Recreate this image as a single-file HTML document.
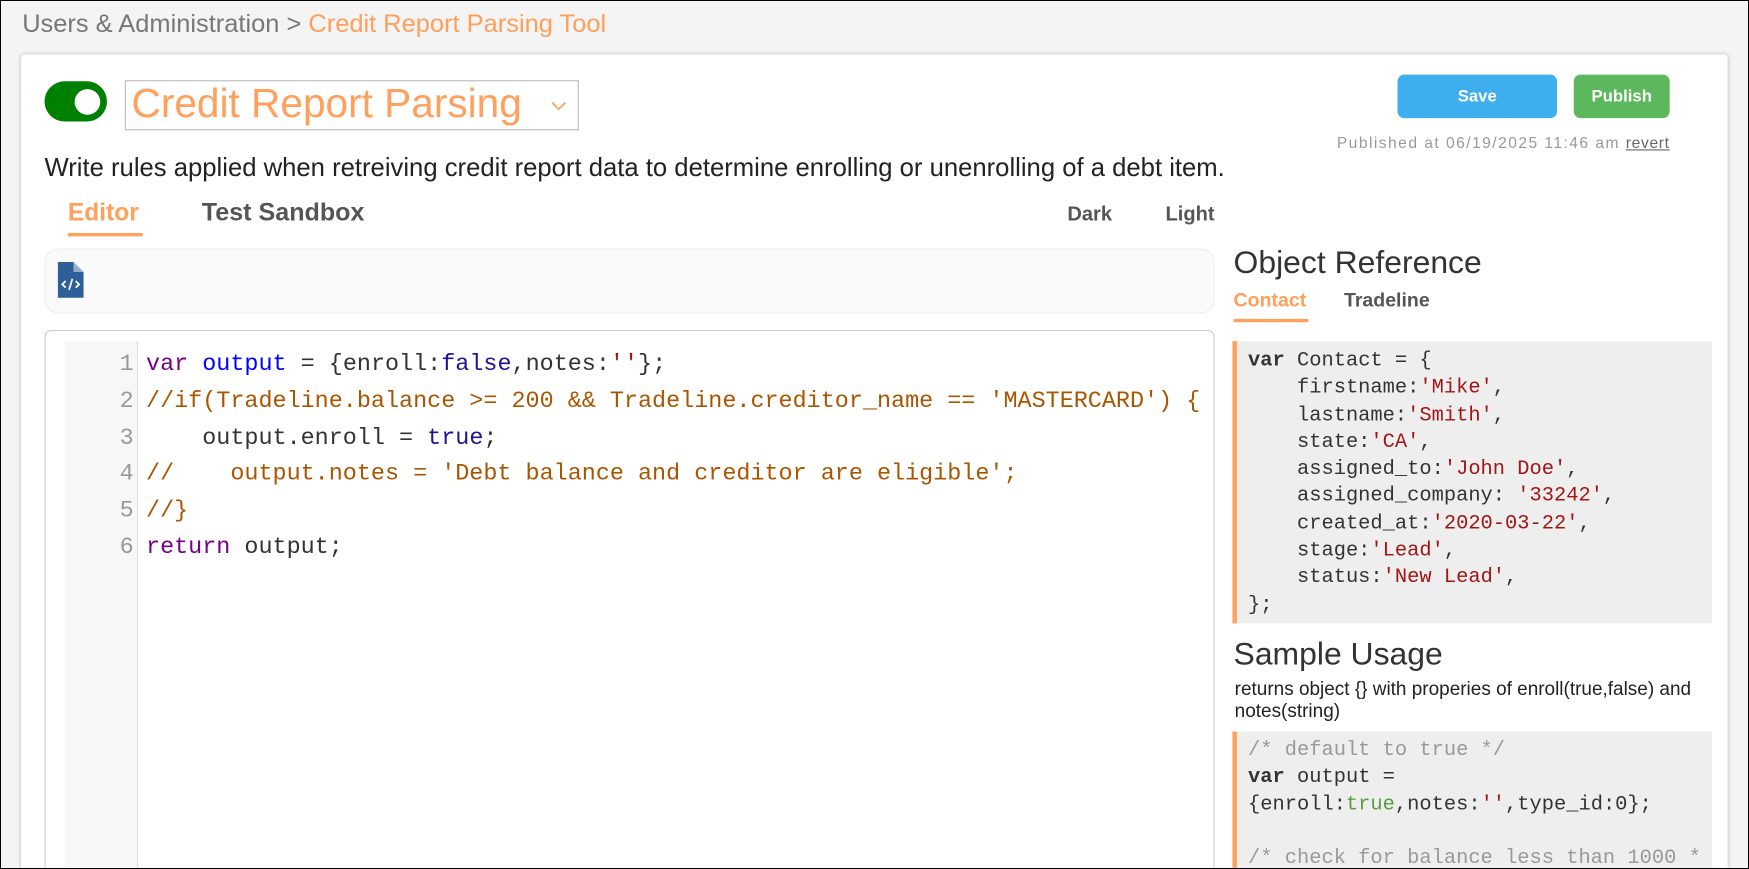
<!DOCTYPE html>
<html><head><meta charset="utf-8"><style>
*{box-sizing:border-box;margin:0;padding:0}
html,body{width:1749px;height:869px;overflow:hidden}
body{background:#f4f4f4;font-family:"Liberation Sans",sans-serif;position:relative;border:1px solid #000}
#w{position:absolute;left:0;top:0;width:1566px;height:777px;transform:scale(1.11543);transform-origin:0 0;overflow:hidden}
.a{position:absolute;white-space:pre}
.card{position:absolute;left:18px;top:48px;width:1530px;height:729px;background:#fff;box-shadow:0 0 4px rgba(0,0,0,.25);border-radius:3px 3px 0 0}
.mono{font-family:"Liberation Mono",monospace}
.k{color:#770088}.d{color:#0000ff}.c{color:#aa5500}.s{color:#aa1111}.a2{color:#221199}
.rc{font-family:"Liberation Mono",monospace;font-size:18.3px;color:#333}
.rs{color:#a31515}.g{color:#999}.gr{color:#5a9e3c}
</style></head><body><div id="w">
<div class="a" style="left:19px;top:7px;font-size:22.8px;color:#777">Users &amp; Administration &gt; <span style="color:#ff9f5a">Credit Report Parsing Tool</span></div>
<div class="card"></div>
<div class="a" style="left:39px;top:72px;width:56px;height:36px;border-radius:18px;background:#008000"></div>
<div class="a" style="left:66px;top:79px;width:23px;height:23px;border-radius:50%;background:#fff"></div>
<div class="a" style="left:111px;top:71px;width:407px;height:45px;border:1px solid #bbb"></div>
<div class="a" style="left:117px;top:71px;font-size:36.4px;color:#ffa05c">Credit Report Parsing</div>
<svg class="a" style="left:492px;top:88px" width="16" height="12"><path d="M2 3 L8 9 L14 3" stroke="#ffa05c" stroke-width="1.5" fill="none"/></svg>
<div class="a" style="left:1252px;top:66px;width:143px;height:39px;background:#3eaeef;border-radius:6px;color:#fff;font-weight:bold;font-size:15px;text-align:center;line-height:39px">Save</div>
<div class="a" style="left:1410px;top:66px;width:86px;height:39px;background:#5cb85c;border-radius:6px;color:#fff;font-weight:bold;font-size:15px;text-align:center;line-height:39px">Publish</div>
<div class="a" style="left:1100px;top:119px;width:396px;text-align:right;font-size:14px;color:#999;letter-spacing:1.3px">Published at 06/19/2025 11:46 am <span style="color:#666;text-decoration:underline;letter-spacing:0.6px">revert</span></div>
<div class="a" style="left:39px;top:136px;font-size:23px;color:#222">Write rules applied when retreiving credit report data to determine enrolling or unenrolling of a debt item.</div>
<div class="a" style="left:60px;top:177px;font-size:22px;font-weight:bold;color:#ffa05c">Editor</div>
<div class="a" style="left:60px;top:208px;width:67px;height:3px;background:#ffa05c"></div>
<div class="a" style="left:180px;top:177px;font-size:22.5px;font-weight:bold;color:#555">Test Sandbox</div>
<div class="a" style="left:956px;top:181px;font-size:18px;font-weight:bold;color:#555">Dark</div>
<div class="a" style="left:1044px;top:181px;font-size:18px;font-weight:bold;color:#555">Light</div>
<div class="a" style="left:39px;top:222px;width:1049px;height:58px;border:1px solid #eee;border-radius:12px;background:#fafafa"></div>
<svg class="a" style="left:50px;top:233px" width="26" height="34"><path d="M1 1 H15 L24 10 V33 H1 Z" fill="#2d5f9a"/><path d="M15 1 V10 H24" fill="#fff" opacity=".5"/><path d="M8 18 L5 21 L8 24 M17 18 L20 21 L17 24 M14 16 L11 26" stroke="#fff" stroke-width="1.6" fill="none"/></svg>
<div class="a" style="left:39px;top:295px;width:1049px;height:490px;border:1px solid #ccc;border-radius:6px;background:#fff"></div>
<div class="a" style="left:57px;top:305px;width:66px;height:480px;background:#f7f7f7;border-right:1px solid #ddd"></div>
<div class="a mono" style="left:57px;top:311px;width:62px;text-align:right;font-size:21px;line-height:32.8px;color:#999">1
2
3
4
5
6</div>
<div class="a mono" style="left:130px;top:311px;font-size:21px;line-height:32.8px;color:#333"><span class="k">var</span> <span class="d">output</span> = {enroll:<span class="a2">false</span>,notes:<span class="s">''</span>};
<span class="c">//if(Tradeline.balance &gt;= 200 &amp;&amp; Tradeline.creditor_name == 'MASTERCARD') {</span>
    output.enroll = <span class="a2">true</span>;
<span class="c">//    output.notes = 'Debt balance and creditor are eligible';</span>
<span class="c">//}</span>
<span class="k">return</span> output;</div>
<div class="a" style="left:1105px;top:219px;font-size:28.6px;color:#333">Object Reference</div>
<div class="a" style="left:1105px;top:258px;font-size:17.5px;font-weight:bold;color:#ffa05c">Contact</div>
<div class="a" style="left:1105px;top:285px;width:67px;height:3px;background:#ffa05c"></div>
<div class="a" style="left:1204px;top:258px;font-size:17.5px;font-weight:bold;color:#555">Tradeline</div>
<div class="a" style="left:1104px;top:305px;width:430px;height:253px;background:#eee;border-left:4px solid #ffa05c"></div>
<div class="a rc" style="left:1118px;top:311px;line-height:24.3px"><b>var</b> Contact = {
    firstname:<span class="rs">'Mike'</span>,
    lastname:<span class="rs">'Smith'</span>,
    state:<span class="rs">'CA'</span>,
    assigned_to:<span class="rs">'John Doe'</span>,
    assigned_company: <span class="rs">'33242'</span>,
    created_at:<span class="rs">'2020-03-22'</span>,
    stage:<span class="rs">'Lead'</span>,
    status:<span class="rs">'New Lead'</span>,
};</div>
<div class="a" style="left:1105px;top:570px;font-size:28.6px;color:#333">Sample Usage</div>
<div class="a" style="left:1106px;top:607px;font-size:17px;line-height:19.5px;color:#222">returns object {} with properies of enroll(true,false) and
notes(string)</div>
<div class="a" style="left:1104px;top:655px;width:430px;height:130px;background:#eee;border-left:4px solid #ffa05c"></div>
<div class="a rc" style="left:1118px;top:660px;line-height:24.3px"><span class="g">/* default to true */</span>
<b>var</b> output =
{enroll:<span class="gr">true</span>,notes:<span class="rs">''</span>,type_id:0};

<span class="g">/* check for balance less than 1000 *</span></div>
</div></body></html>
